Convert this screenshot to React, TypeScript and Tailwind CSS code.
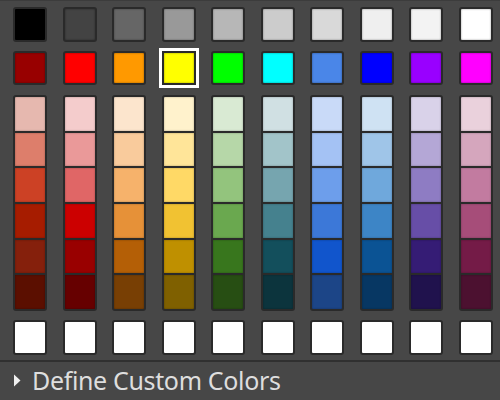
const greys = ['#000000', '#434343', '#666666', '#999999', '#b7b7b7', '#cccccc', '#d9d9d9', '#efefef', '#f3f3f3', '#ffffff']
const brights = ['#980000', '#ff0000', '#ff9900', '#ffff00', '#00ff00', '#00ffff', '#4a86e8', '#0000ff', '#9900ff', '#ff00ff']

// one column per hue, light to dark
const shades = [
  ['#e6b8af', '#dd7e6b', '#cc4125', '#a61c00', '#85200c', '#5b0f00'],
  ['#f4cccc', '#ea9999', '#e06666', '#cc0000', '#990000', '#660000'],
  ['#fce5cd', '#f9cb9c', '#f6b26b', '#e69138', '#b45f06', '#783f04'],
  ['#fff2cc', '#ffe599', '#ffd966', '#f1c232', '#bf9000', '#7f6000'],
  ['#d9ead3', '#b6d7a8', '#93c47d', '#6aa84f', '#38761d', '#274e13'],
  ['#d0e0e3', '#a2c4c9', '#76a5af', '#45818e', '#134f5c', '#0c343d'],
  ['#c9daf8', '#a4c2f4', '#6d9eeb', '#3c78d8', '#1155cc', '#1c4587'],
  ['#cfe2f3', '#9fc5e8', '#6fa8dc', '#3d85c6', '#0b5394', '#073763'],
  ['#d9d2e9', '#b4a7d6', '#8e7cc3', '#674ea7', '#351c75', '#20124d'],
  ['#ead1dc', '#d5a6bd', '#c27ba0', '#a64d79', '#741b47', '#4c1130'],
]

const selected = '#ffff00'

function Swatch({ color, tall }: { color: string; tall?: boolean }) {
  const isSel = color === selected
  return (
    <div
      className={
        'border-2 border-[#2a2a2a] shadow-[inset_0_0_2px_rgba(0,0,0,0.45)] ' +
        (tall ? 'h-[35px] ' : 'h-[34px] ') +
        (isSel ? 'outline-[3px] outline-solid outline-white' : 'rounded-[3px]')
      }
      style={{ backgroundColor: color }}
    />
  )
}

export default function App() {
  return (
    <div
      className="w-[500px] h-[400px] bg-[#474747] border-t border-[#3c3c3c] flex flex-col overflow-hidden"
      style={{ fontFamily: '"Noto Sans", "Open Sans", sans-serif' }}
    >
      <div className="px-[13px] pt-[6px]">
        <div className="grid grid-cols-[repeat(10,34px)] gap-x-[15.5px] gap-y-[9px]">
          {greys.map((c) => (
            <Swatch key={c} color={c} tall />
          ))}
          {brights.map((c) => (
            <Swatch key={c} color={c} />
          ))}
        </div>

        <div className="grid grid-cols-[repeat(10,34px)] gap-x-[15.5px] mt-[10px]">
          {shades.map((col, i) => (
            <div
              key={i}
              className="h-[216px] flex flex-col rounded-[3px] border-2 border-[#2a2a2a] overflow-hidden bg-[#2a2a2a] gap-[2px]"
            >
              {col.map((c) => (
                <div
                  key={c}
                  className="flex-1 shadow-[inset_0_0_2px_rgba(0,0,0,0.35)]"
                  style={{ backgroundColor: c }}
                />
              ))}
            </div>
          ))}
        </div>

        <div className="grid grid-cols-[repeat(10,34px)] gap-x-[15.5px] mt-[9px]">
          {Array.from({ length: 10 }).map((_, i) => (
            <div key={i} className="h-[35px] rounded-[3px] border-2 border-[#2a2a2a] bg-white" />
          ))}
        </div>
      </div>

      <div className="mt-[5px] border-t-2 border-[#303030] flex-1 flex items-center pl-[13px] gap-[11px] pb-[2px]">
        <svg width="8" height="13" viewBox="0 0 8 13">
          <path d="M1 0.5 L7.5 6.5 L1 12.5 Z" fill="#f0f0f0" />
        </svg>
        <span className="text-[#dedede] text-[25px] leading-none tracking-[-0.35px]">Define Custom Colors</span>
      </div>
    </div>
  )
}
